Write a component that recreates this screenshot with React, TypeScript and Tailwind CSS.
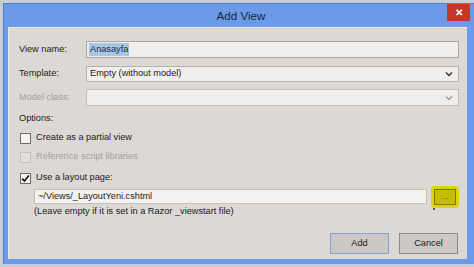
import React from "react";

const font = { fontFamily: '"Liberation Sans", Arial, sans-serif' };

function Chevron({ light }: { light?: boolean }) {
  return (
    <svg width="8" height="6" viewBox="0 0 8 6" className="shrink-0">
      <path d="M1 1.5 L4 4.5 L7 1.5" fill="none" stroke={light ? "#9c9a98" : "#333"} strokeWidth="1.4" />
    </svg>
  );
}

function Box({ checked, disabled }: { checked?: boolean; disabled?: boolean }) {
  return (
    <div
      className={`w-[11px] h-[11px] border flex items-center justify-center shrink-0 ${
        disabled ? "border-[#c4c1bd] bg-[#e2dfdb]" : "border-[#6f6d6b] bg-[#f6f5f3]"
      }`}
    >
      {checked && (
        <svg width="9" height="9" viewBox="0 0 9 9">
          <path d="M1.2 4.6 L3.4 7 L7.8 1.4" fill="none" stroke="#111" strokeWidth="1.6" />
        </svg>
      )}
    </div>
  );
}

export default function App() {
  return (
    <div className="w-[474px] h-[267px] bg-[#c9ced6] pl-[3px] pt-[3px] overflow-hidden" style={font}>
      <div className="w-[471px] h-[261px] bg-[#6b9be8] border-l border-t border-[#4f7fc9] flex flex-col">
        <div className="h-[23px] flex items-center relative">
          <div className="flex-1 text-center text-[11.6px] text-[#1c2438] pl-[4px] pt-[1px]">Add View</div>
          <div className="absolute right-[4px] top-0 w-[23px] h-[17px] bg-[#c4382b] flex items-center justify-center text-white text-[10px] font-bold leading-none">
            ✕
          </div>
        </div>
        <div className="ml-[4px] mr-[7px] h-[232px] bg-[#dcd9d5] border-t border-l border-[#ece9e6] pl-[10px] pr-[8px] text-[9.2px] text-[#1a1a1a] flex flex-col">
          <div className="h-[13px]" />
          <div className="h-[17px] flex items-center">
            <div className="w-[67px]">View name:</div>
            <div className="flex-1 h-[17px] bg-[#f1efed] border border-[#a9a7a4] flex items-center px-[2px]">
              <span className="bg-[#a9c6e6] px-[1px] text-[#1b2a44]">Anasayfa</span>
            </div>
          </div>
          <div className="h-[8px]" />
          <div className="h-[16px] flex items-center">
            <div className="w-[67px]">Template:</div>
            <div className="flex-1 h-[16px] bg-[#f1efed] border border-[#b4b1ad] flex items-center pl-[3px] pr-[5px]">
              <span className="flex-1">Empty (without model)</span>
              <Chevron />
            </div>
          </div>
          <div className="h-[7px]" />
          <div className="h-[17px] flex items-center">
            <div className="w-[67px] text-[#a3a09d]">Model class:</div>
            <div className="flex-1 h-[17px] bg-[#f0eeec] border border-[#c2bfbb] flex items-center justify-end pr-[5px]">
              <Chevron light />
            </div>
          </div>
          <div className="h-[6px]" />
          <div className="h-[13px] flex items-center">Options:</div>
          <div className="h-[7px]" />
          <div className="h-[12px] flex items-center gap-[5px] pl-[1px]">
            <Box />
            <span>Create as a partial view</span>
          </div>
          <div className="h-[7px]" />
          <div className="h-[12px] flex items-center gap-[5px] pl-[1px] text-[#a3a09d]">
            <Box disabled />
            <span>Reference script libraries</span>
          </div>
          <div className="h-[9px]" />
          <div className="h-[12px] flex items-center gap-[5px] pl-[1px]">
            <Box checked />
            <span>Use a layout page:</span>
          </div>
          <div className="h-[4px]" />
          <div className="h-[17px] flex items-center pl-[15px]">
            <div className="w-[396px] h-[15px] bg-[#f3f2f0] border border-[#c4c1bd] flex items-center px-[3px]">
              ~/Views/_LayoutYeni.cshtml
            </div>
            <div className="ml-[4px] w-[28px] h-[22px] bg-[#dcd600] rounded-[4px] flex items-center justify-center">
              <div className="w-[22px] h-[16px] bg-[#c7bd00] border border-[#7d7700] flex items-center justify-center text-[8px] leading-none text-[#333]">
                ...
              </div>
            </div>
          </div>
          <div className="h-[13px] flex items-center pl-[15px] relative">
            (Leave empty if it is set in a Razor _viewstart file)
            <div className="absolute left-[414px] top-[3px] w-[2px] h-[2px] bg-[#555]" />
          </div>
          <div className="h-[15px]" />
          <div className="flex justify-end gap-[10px] pr-[1px]">
            <div className="w-[59px] h-[21px] bg-[#ccc8c3] border border-[#7fa3d6] flex items-center justify-center">Add</div>
            <div className="w-[59px] h-[21px] bg-[#ccc8c3] border border-[#8e8b87] flex items-center justify-center">Cancel</div>
          </div>
        </div>
      </div>
    </div>
  );
}
